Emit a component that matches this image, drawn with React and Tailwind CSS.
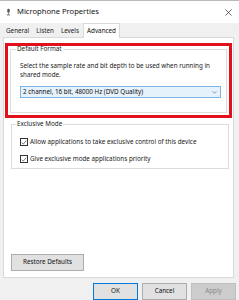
import React from "react";

const Check = () => (
  <span className="flex h-[8px] w-[8px] shrink-0 items-center justify-center border border-[#333] bg-white">
    <svg viewBox="0 0 8 8" className="h-[7px] w-[7px]">
      <path d="M1 4.2 L3 6.2 L7 1.5" fill="none" stroke="#222" strokeWidth="0.8" />
    </svg>
  </span>
);

const Tab = ({ label, active }) =>
  active ? (
    <div className="relative z-10 -mb-px flex h-[15px] items-center border border-b-0 border-[#d9d9d9] bg-white px-[3px] text-[#111]">
      {label}
    </div>
  ) : (
    <div className="mt-[2px] flex h-[12px] items-center px-[3px] text-[#222]">{label}</div>
  );

const App = () => {
  return (
    <div
      className="flex h-[300px] w-[239px] flex-col overflow-hidden bg-[#f0f0f0] text-[6.3px] leading-none"
      style={{ fontFamily: '"Noto Sans", "Segoe UI", sans-serif' }}
    >
      {/* title bar */}
      <div className="flex h-[23px] shrink-0 items-center border-t border-[#bbb] bg-white pl-[6px] pr-[7px]">
        <svg viewBox="0 0 6 8" className="mr-[6px] h-[8px] w-[5px]">
          <rect x="1.5" y="0" width="3" height="5" rx="1.5" fill="#555" />
          <rect x="2.6" y="5" width="0.8" height="2" fill="#555" />
          <rect x="1" y="7" width="4" height="1" fill="#555" />
        </svg>
        <span className="text-[7.6px] text-[#111]">Microphone Properties</span>
        <svg viewBox="0 0 8 8" className="ml-auto h-[7px] w-[7px]">
          <path d="M0.5 0.5 L7.5 7.5 M7.5 0.5 L0.5 7.5" stroke="#333" strokeWidth="0.8" />
        </svg>
      </div>

      {/* tabs */}
      <div className="flex items-end gap-[1px] pl-[3px]">
        <Tab label="General" />
        <Tab label="Listen" />
        <Tab label="Levels" />
        <Tab label="Advanced" active />
      </div>

      {/* tab panel */}
      <div className="ml-[3px] mr-[5px] flex h-[241px] shrink-0 flex-col border border-[#d9d9d9] bg-white px-[1px] pt-[5px]">
        <div className="h-[75px] border-[3px] border-[#e2101a] px-[2px] pt-[3px]">
          <div className="relative h-[64px] border border-[#dcdcdc] pl-[9px] pr-[5px] pt-[11px]">
            <span className="absolute -top-[4px] left-[5px] bg-white px-[1px] text-[#222]">Default Format</span>
            <p className="leading-[9px] text-[#222]">
              Select the sample rate and bit depth to be used when running in shared mode.
            </p>
            <div className="mt-[7px] flex h-[12px] items-center border border-[#7eb4ea] bg-[#e5f1fb] pl-[2px] pr-[3px] text-[#111]">
              <span>2 channel, 16 bit, 48000 Hz (DVD Quality)</span>
              <svg viewBox="0 0 6 4" className="ml-auto h-[3px] w-[5px]">
                <path d="M0.5 0.5 L3 3 L5.5 0.5" fill="none" stroke="#444" strokeWidth="0.7" />
              </svg>
            </div>
          </div>
        </div>

        <div className="relative ml-[6px] mr-[3px] mt-[6px] flex h-[45px] flex-col gap-[9px] border border-[#dcdcdc] pl-[8px] pt-[13px] text-[#222]">
          <span className="absolute -top-[4px] left-[4px] bg-white px-[1px]">Exclusive Mode</span>
          <div className="flex items-center gap-[2px]">
            <Check />
            <span>Allow applications to take exclusive control of this device</span>
          </div>
          <div className="flex items-center gap-[2px]">
            <Check />
            <span>Give exclusive mode applications priority</span>
          </div>
        </div>

        <button className="ml-[6px] mt-[85px] flex h-[17px] w-[73px] items-center justify-center border border-[#adadad] bg-[#e1e1e1] text-[#111]">
          Restore Defaults
        </button>
      </div>

      {/* footer buttons */}
      <div className="mt-[5px] flex gap-[4px] pl-[93px]">
        <button className="flex h-[17px] w-[45px] items-center justify-center border border-[#0078d7] bg-[#e1e1e1] text-[#111]">
          OK
        </button>
        <button className="flex h-[17px] w-[45px] items-center justify-center border border-[#adadad] bg-[#e1e1e1] text-[#111]">
          Cancel
        </button>
        <button className="flex h-[17px] w-[45px] items-center justify-center border border-[#bfbfbf] bg-[#cccccc] text-[#8a8a8a]">
          Apply
        </button>
      </div>
    </div>
  );
};

export default App;
